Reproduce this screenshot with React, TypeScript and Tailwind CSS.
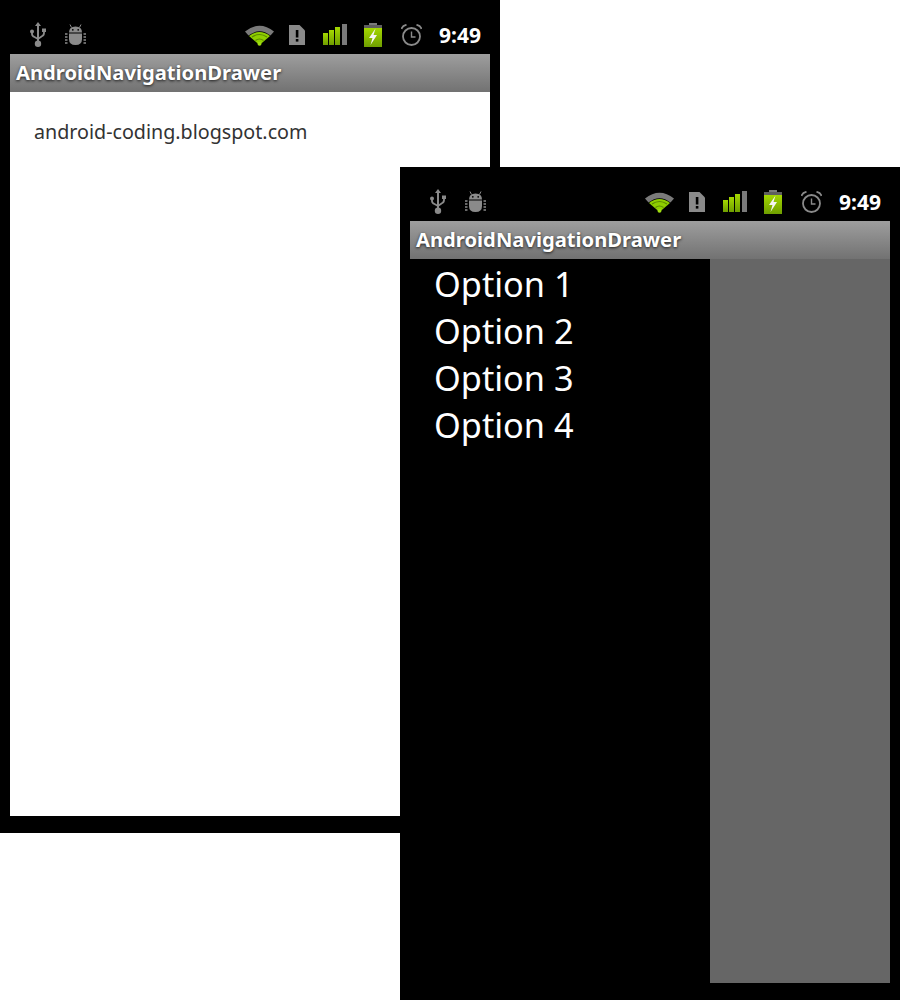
import React from 'react';

const UsbIcon = () => (
  <svg width="16" height="25" viewBox="0 0 16 25" className="block">
    <path d="M8 0 L11 4 H9 V20 H7 V4 H5 Z" fill="#8a8a8a" />
    <path d="M2 10 V12 Q2 14 4.5 15 L8 17 L11.5 14.5 Q14 13.5 14 11 V9" fill="none" stroke="#8a8a8a" strokeWidth="1.8" />
    <circle cx="2" cy="9.5" r="2" fill="#8a8a8a" />
    <rect x="12" y="6.5" width="4" height="3.5" fill="#8a8a8a" />
    <circle cx="8" cy="21.7" r="3.2" fill="#8a8a8a" />
  </svg>
);

const AndroidIcon = () => (
  <svg width="21" height="21" viewBox="0 0 21 21" className="block">
    <path d="M4 8.5 Q4 2.5 10.5 2.5 Q17 2.5 17 8.5 Z" fill="#8a8a8a" />
    <path d="M6.5 3.5 L5 0.5 M14.5 3.5 L16 0.5" stroke="#8a8a8a" strokeWidth="1" />
    <path d="M4 9.5 H17 V15 Q17 21 10.5 21 Q4 21 4 15 Z" fill="#8a8a8a" />
    <circle cx="7.8" cy="5.8" r="0.9" fill="#000" />
    <circle cx="13.2" cy="5.8" r="0.9" fill="#000" />
    <path d="M0 10 H2.5 M0 13 H2.5 M0 16 H2.5 M0 19 H2.5 M18.5 10 H21 M18.5 13 H21 M18.5 16 H21 M18.5 19 H21" stroke="#8a8a8a" strokeWidth="1.4" />
  </svg>
);

const WifiIcon = () => (
  <svg width="29" height="22" viewBox="0 0 29 22" className="block">
    <path d="M0 7.5 Q14.5 -4 29 7.5 L25.5 11.5 Q14.5 3 3.5 11.5 Z" fill="#7a7a7a" />
    <path d="M4 12 Q14.5 4 25 12 L14.5 21 Z" fill="#8fce00" />
    <path d="M7 13 Q14.5 8 22 13 M10.5 16.5 Q14.5 13.5 18.5 16.5" fill="none" stroke="#5c8a00" strokeWidth="1.2" />
    <circle cx="14.5" cy="19.8" r="2" fill="#9fdc10" />
  </svg>
);

const SimIcon = () => (
  <svg width="16" height="20" viewBox="0 0 16 20" className="block">
    <path d="M0 0 H10.5 L16 5.5 V20 H0 Z" fill="#8a8a8a" />
    <rect x="6.8" y="5" width="2.6" height="7.5" fill="#000" />
    <rect x="6.8" y="14" width="2.6" height="2.6" fill="#000" />
  </svg>
);

const SignalIcon = ({ id }: { id: string }) => (
  <svg width="24" height="21" viewBox="0 0 24 21" className="block">
    <defs>
      <linearGradient id={id} x1="0" y1="0" x2="0" y2="1">
        <stop offset="0" stopColor="#a4d800" />
        <stop offset="1" stopColor="#6f9e00" />
      </linearGradient>
    </defs>
    <rect x="0" y="9" width="5" height="12" fill={`url(#${id})`} />
    <rect x="6" y="6" width="5" height="15" fill={`url(#${id})`} />
    <rect x="12" y="3" width="5" height="18" fill={`url(#${id})`} />
    <rect x="19" y="0" width="5" height="21" fill="#7a7a7a" />
  </svg>
);

const BatteryIcon = ({ id }: { id: string }) => (
  <svg width="18" height="24" viewBox="0 0 18 24" className="block">
    <defs>
      <linearGradient id={id} x1="0" y1="0" x2="0" y2="1">
        <stop offset="0" stopColor="#a4d800" />
        <stop offset="1" stopColor="#6f9e00" />
      </linearGradient>
    </defs>
    <rect x="5" y="0" width="8" height="2" fill="#7a7a7a" />
    <rect x="0" y="2" width="18" height="3" fill="#5f5f5f" />
    <rect x="0" y="5" width="18" height="19" fill={`url(#${id})`} />
    <path d="M11.5 5.5 L5 15 H8.5 L6.5 22 L13 12 H9.5 Z" fill="#f4f4f4" />
  </svg>
);

const AlarmIcon = () => (
  <svg width="21" height="22" viewBox="0 0 21 22" className="block">
    <circle cx="10.5" cy="12.5" r="8.5" fill="none" stroke="#8a8a8a" strokeWidth="1.8" />
    <path d="M10.5 7.5 V13 H14.5" fill="none" stroke="#8a8a8a" strokeWidth="1.4" />
    <path d="M0.5 5 Q1.5 1.5 5.5 0.8 M20.5 5 Q19.5 1.5 15.5 0.8" fill="none" stroke="#8a8a8a" strokeWidth="1.8" />
  </svg>
);

const StatusBar = ({ id }: { id: string }) => (
  <div className="flex h-[37px] items-center pb-[2px] pl-5 pr-[9px]">
    <div className="flex items-center gap-[19px]">
      <UsbIcon />
      <AndroidIcon />
    </div>
    <div className="ml-auto flex items-center">
      <WifiIcon />
      <div className="ml-[15px]"><SimIcon /></div>
      <div className="ml-[18px]"><SignalIcon id={`${id}-signal`} /></div>
      <div className="ml-[17px]"><BatteryIcon id={`${id}-battery`} /></div>
      <div className="ml-[19px]"><AlarmIcon /></div>
      <span className="ml-[17px] mt-[2px] text-[21px] font-bold leading-none text-white">9:49</span>
    </div>
  </div>
);

const TitleBar = () => (
  <div className="flex h-[38px] items-center bg-gradient-to-b from-[#9e9e9e] to-[#727272] pb-[2px] pl-[6px]">
    <span className="text-[20.2px] font-bold leading-none text-white [text-shadow:0_1px_3px_rgba(0,0,0,0.8)]">
      AndroidNavigationDrawer
    </span>
  </div>
);

const options = ['Option 1', 'Option 2', 'Option 3', 'Option 4'];

export default function App() {
  return (
    <div className="relative h-[1000px] w-[900px] overflow-hidden bg-white font-['Noto_Sans','Open_Sans',sans-serif]">
      {/* first capture */}
      <div className="absolute left-0 top-0 flex h-[833px] w-[500px] flex-col bg-black px-[10px] pb-[17px] pt-[17px]">
        <StatusBar id="a" />
        <TitleBar />
        <div className="flex-1 bg-white pl-6 pt-[26px]">
          <p className="text-[19.7px] leading-7 text-[#333333]">android-coding.blogspot.com</p>
        </div>
      </div>

      {/* second capture, drawer open */}
      <div className="absolute left-[400px] top-[167px] flex h-[833px] w-[500px] flex-col bg-black px-[10px] pb-[17px] pt-[17px]">
        <StatusBar id="b" />
        <TitleBar />
        <div className="flex flex-1">
          <ul className="w-[300px] bg-black pl-6 pt-[2px]">
            {options.map((o) => (
              <li key={o} className="flex h-[47px] items-center text-[34.3px] leading-none text-white">
                {o}
              </li>
            ))}
          </ul>
          <div className="flex-1 bg-[#666666]" />
        </div>
      </div>
    </div>
  );
}
